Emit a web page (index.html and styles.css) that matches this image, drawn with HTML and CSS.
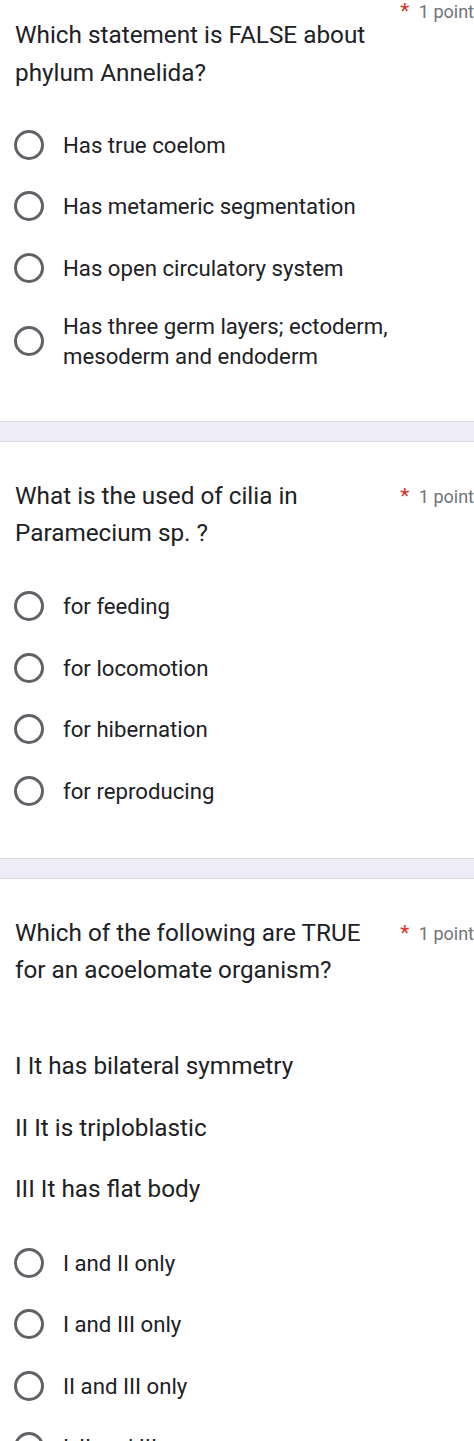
FILE: index.html
```html
<!DOCTYPE html>
<html lang="en">
<head>
<meta charset="utf-8">
<title>Quiz</title>
<link rel="stylesheet" href="styles.css">
</head>
<body>
<main class="form">
  <section class="question q1">
    <div class="points-row"><span class="points"><span class="star">*</span> 1 point</span></div>
    <h2 class="title">Which statement is FALSE about phylum Annelida?</h2>
    <ul class="options">
      <li class="option"><span class="radio"></span><span class="label">Has true coelom</span></li>
      <li class="option"><span class="radio"></span><span class="label">Has metameric segmentation</span></li>
      <li class="option"><span class="radio"></span><span class="label">Has open circulatory system</span></li>
      <li class="option multi"><span class="radio"></span><span class="label">Has three germ layers; ectoderm, mesoderm and endoderm</span></li>
    </ul>
  </section>
  <div class="divider"></div>
  <section class="question q2">
    <div class="header">
      <h2 class="title">What is the used of cilia in Paramecium sp. ?</h2>
      <span class="points"><span class="star">*</span> 1 point</span>
    </div>
    <ul class="options">
      <li class="option"><span class="radio"></span><span class="label">for feeding</span></li>
      <li class="option"><span class="radio"></span><span class="label">for locomotion</span></li>
      <li class="option"><span class="radio"></span><span class="label">for hibernation</span></li>
      <li class="option"><span class="radio"></span><span class="label">for reproducing</span></li>
    </ul>
  </section>
  <div class="divider"></div>
  <section class="question q3">
    <div class="header">
      <h2 class="title">Which of the following are TRUE for an acoelomate organism?</h2>
      <span class="points"><span class="star">*</span> 1 point</span>
    </div>
    <ul class="statements">
      <li class="statement">I It has bilateral symmetry</li>
      <li class="statement">II It is triploblastic</li>
      <li class="statement">III It has flat body</li>
    </ul>
    <ul class="options">
      <li class="option"><span class="radio"></span><span class="label">I and II only</span></li>
      <li class="option"><span class="radio"></span><span class="label">I and III only</span></li>
      <li class="option"><span class="radio"></span><span class="label">II and III only</span></li>
      <li class="option"><span class="radio"></span><span class="label">I, II and III</span></li>
    </ul>
  </section>
</main>
</body>
</html>
```

FILE: styles.css
```css
* { box-sizing: border-box; }
html, body {
  margin: 0;
  padding: 0;
  background: #ffffff;
}
body {
  font-family: Roboto, "Noto Sans", "Liberation Sans", sans-serif;
  color: #202124;
  width: 474px;
  overflow: hidden;
}
.form {
  display: flex;
  flex-direction: column;
}
.question {
  padding: 0 0 0 15px;
}
.points-row {
  display: flex;
  justify-content: flex-end;
  height: 20px;
  padding-top: 3px;
}
.points {
  font-size: 18px;
  line-height: 17px;
  color: #70757a;
  white-space: nowrap;
  flex: none;
}
.star {
  color: #d93025;
  font-size: 21px;
  margin-right: 5px;
}
.title {
  margin: 0;
  font-size: 24.3px;
  font-weight: 400;
  line-height: 37.5px;
  max-width: 372px;
}
.q1 .title {
  margin-top: -4px;
}
.header {
  display: flex;
  justify-content: space-between;
  align-items: flex-start;
  padding-top: 35px;
}
.header .points {
  padding-top: 11px;
}
.options, .statements {
  list-style: none;
  margin: 0;
  padding: 0;
}
.option {
  display: flex;
  align-items: center;
  padding: 15.75px 0;
}
.option.multi {
  padding: 12px 0;
}
.radio {
  flex: none;
  width: 30px;
  height: 30px;
  border: 3px solid #5f6368;
  border-radius: 50%;
  margin-left: -1px;
  margin-right: 19px;
}
.label {
  font-size: 22.2px;
  line-height: 30px;
  max-width: 345px;
}
.q1 .options {
  margin-top: 23px;
  margin-bottom: 38px;
}
.q2 .options {
  margin-top: 24px;
  margin-bottom: 36px;
}
.statements {
  margin-top: 47px;
}
.statement {
  font-size: 24.3px;
  line-height: 30px;
  padding: 15.75px 0;
}
.q3 .options {
  margin-top: 12px;
}
.divider {
  height: 21px;
  background: #eeedf7;
  border-top: 1px solid #d9d9de;
  border-bottom: 1px solid #d9d9de;
}
```
